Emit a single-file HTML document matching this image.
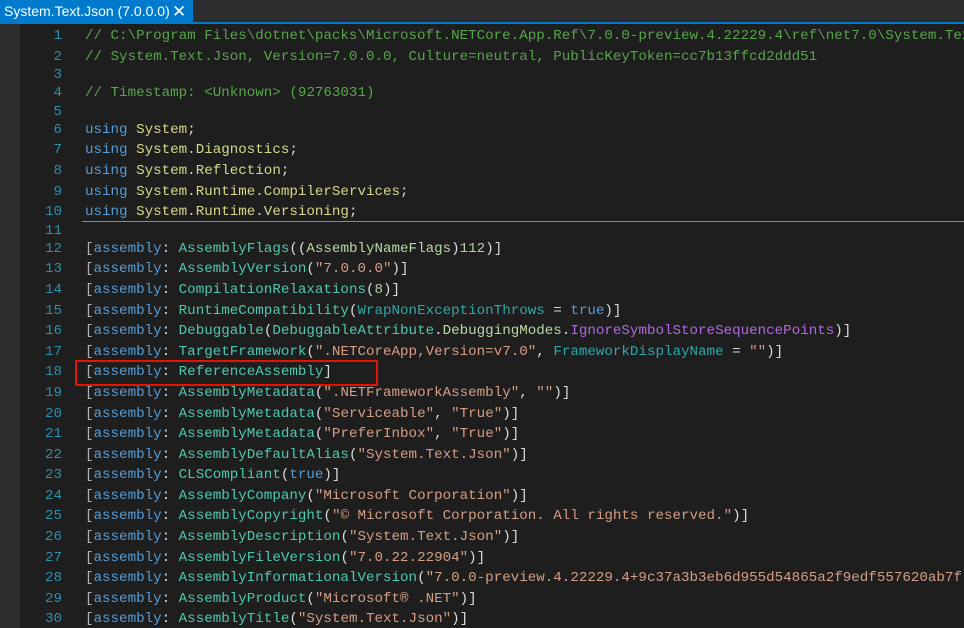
<!DOCTYPE html>
<html><head><style>
html,body{margin:0;width:964px;height:628px;overflow:hidden}
body{background:#1e1e1e;position:relative;font-family:"Liberation Mono",monospace;}
.tabbar{position:absolute;left:0;top:0;width:964px;height:24px;background:#2d2d30;border-bottom:2px solid #007acc;box-sizing:border-box}
.tab{position:absolute;left:0;top:0;width:193px;height:24px;background:#007acc;color:#fff;font:14px "Liberation Sans",sans-serif;line-height:23px;padding-left:4px;box-sizing:border-box}
.tab span{position:absolute;left:172px;top:0;font-size:17px}
.strip{position:absolute;left:0;top:24px;width:20px;height:604px;background:#2d2d30}
.code{position:absolute;left:20px;top:26px;width:944px;height:602px;overflow:hidden;font-size:14.2px;color:#dcdcdc}
.l{height:20.6px;line-height:20.6px;white-space:pre;overflow:hidden}
.e{height:16px;line-height:16px;white-space:pre}
.n{display:inline-block;width:42px;text-align:right;color:#2b91af;margin-right:23px}
.c{color:#57a64a}.k{color:#569cd6}.y{color:#d7d78a}.t{color:#4ec9b0}.s{color:#d69d85}.p{color:#b4b4b4}.m{color:#b5cea8}.f{color:#2fa8a8}.g{color:#b8d7a3}.v{color:#b267e6}
.ul{position:absolute;left:82px;top:221px;width:882px;height:1px;background:#8a8a8a}
.box{position:absolute;left:75px;top:360px;width:299px;height:22px;border:2px solid #e51400}
</style></head><body>
<div class="tabbar"><div class="tab">System.Text.Json (7.0.0.0)<span>✕</span></div></div>
<div class="strip"></div>
<div class="code"><div class="l"><span class="n">1</span><span class="c">// C:\Program Files\dotnet\packs\Microsoft.NETCore.App.Ref\7.0.0-preview.4.22229.4\ref\net7.0\System.Text.Json.dll</span></div><div class="l"><span class="n">2</span><span class="c">// System.Text.Json, Version=7.0.0.0, Culture=neutral, PublicKeyToken=cc7b13ffcd2ddd51</span></div><div class="e"><span class="n">3</span></div><div class="l"><span class="n">4</span><span class="c">// Timestamp: &lt;Unknown&gt; (92763031)</span></div><div class="e"><span class="n">5</span></div><div class="l"><span class="n">6</span><span class="k">using</span> <span class="y">System</span>;</div><div class="l"><span class="n">7</span><span class="k">using</span> <span class="y">System.Diagnostics</span>;</div><div class="l"><span class="n">8</span><span class="k">using</span> <span class="y">System.Reflection</span>;</div><div class="l"><span class="n">9</span><span class="k">using</span> <span class="y">System.Runtime.CompilerServices</span>;</div><div class="l"><span class="n">10</span><span class="k">using</span> <span class="y">System.Runtime.Versioning</span>;</div><div class="e"><span class="n">11</span></div><div class="l"><span class="n">12</span><span class="p">[</span><span class="k">assembly</span>: <span class="t">AssemblyFlags</span>((<span class="g">AssemblyNameFlags</span>)<span class="m">112</span>)]</div><div class="l"><span class="n">13</span><span class="p">[</span><span class="k">assembly</span>: <span class="t">AssemblyVersion</span>(<span class="s">"7.0.0.0"</span>)]</div><div class="l"><span class="n">14</span><span class="p">[</span><span class="k">assembly</span>: <span class="t">CompilationRelaxations</span>(<span class="m">8</span>)]</div><div class="l"><span class="n">15</span><span class="p">[</span><span class="k">assembly</span>: <span class="t">RuntimeCompatibility</span>(<span class="f">WrapNonExceptionThrows</span> = <span class="k">true</span>)]</div><div class="l"><span class="n">16</span><span class="p">[</span><span class="k">assembly</span>: <span class="t">Debuggable</span>(<span class="t">DebuggableAttribute</span>.<span class="g">DebuggingModes</span>.<span class="v">IgnoreSymbolStoreSequencePoints</span>)]</div><div class="l"><span class="n">17</span><span class="p">[</span><span class="k">assembly</span>: <span class="t">TargetFramework</span>(<span class="s">".NETCoreApp,Version=v7.0"</span>, <span class="f">FrameworkDisplayName</span> = <span class="s">""</span>)]</div><div class="l"><span class="n">18</span><span class="p">[</span><span class="k">assembly</span>: <span class="t">ReferenceAssembly</span>]</div><div class="l"><span class="n">19</span><span class="p">[</span><span class="k">assembly</span>: <span class="t">AssemblyMetadata</span>(<span class="s">".NETFrameworkAssembly"</span>, <span class="s">""</span>)]</div><div class="l"><span class="n">20</span><span class="p">[</span><span class="k">assembly</span>: <span class="t">AssemblyMetadata</span>(<span class="s">"Serviceable"</span>, <span class="s">"True"</span>)]</div><div class="l"><span class="n">21</span><span class="p">[</span><span class="k">assembly</span>: <span class="t">AssemblyMetadata</span>(<span class="s">"PreferInbox"</span>, <span class="s">"True"</span>)]</div><div class="l"><span class="n">22</span><span class="p">[</span><span class="k">assembly</span>: <span class="t">AssemblyDefaultAlias</span>(<span class="s">"System.Text.Json"</span>)]</div><div class="l"><span class="n">23</span><span class="p">[</span><span class="k">assembly</span>: <span class="t">CLSCompliant</span>(<span class="k">true</span>)]</div><div class="l"><span class="n">24</span><span class="p">[</span><span class="k">assembly</span>: <span class="t">AssemblyCompany</span>(<span class="s">"Microsoft Corporation"</span>)]</div><div class="l"><span class="n">25</span><span class="p">[</span><span class="k">assembly</span>: <span class="t">AssemblyCopyright</span>(<span class="s">"© Microsoft Corporation. All rights reserved."</span>)]</div><div class="l"><span class="n">26</span><span class="p">[</span><span class="k">assembly</span>: <span class="t">AssemblyDescription</span>(<span class="s">"System.Text.Json"</span>)]</div><div class="l"><span class="n">27</span><span class="p">[</span><span class="k">assembly</span>: <span class="t">AssemblyFileVersion</span>(<span class="s">"7.0.22.22904"</span>)]</div><div class="l"><span class="n">28</span><span class="p">[</span><span class="k">assembly</span>: <span class="t">AssemblyInformationalVersion</span>(<span class="s">"7.0.0-preview.4.22229.4+9c37a3b3eb6d955d54865a2f9edf557620ab7f"</span>)]</div><div class="l"><span class="n">29</span><span class="p">[</span><span class="k">assembly</span>: <span class="t">AssemblyProduct</span>(<span class="s">"Microsoft® .NET"</span>)]</div><div class="l"><span class="n">30</span><span class="p">[</span><span class="k">assembly</span>: <span class="t">AssemblyTitle</span>(<span class="s">"System.Text.Json"</span>)]</div></div>
<div class="ul"></div>
<div class="box"></div>
</body></html>
